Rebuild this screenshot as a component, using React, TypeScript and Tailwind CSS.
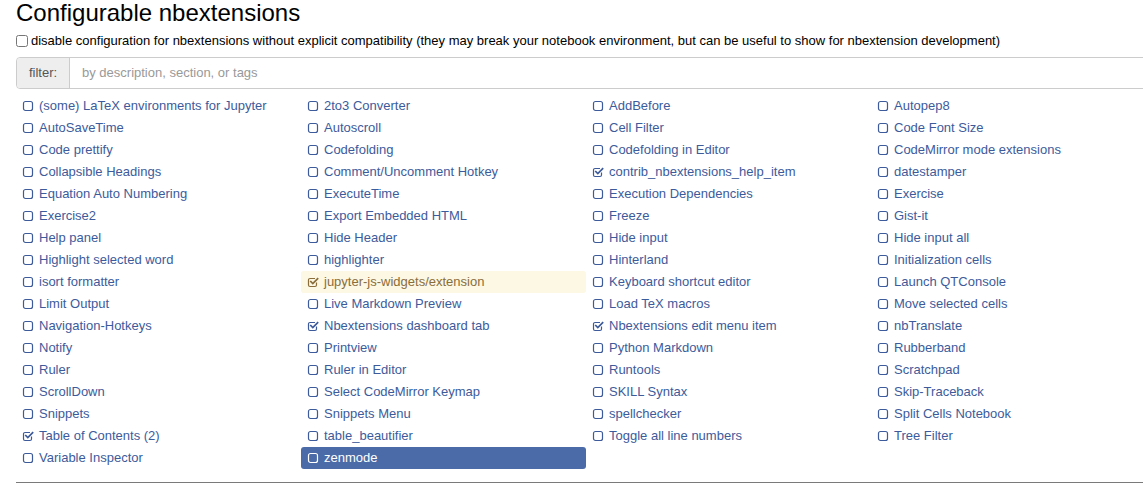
import React from 'react';

type Ext = { name: string; checked?: boolean; state?: 'warn' | 'active' };

const rows: Ext[][] = [
  [{ name: '(some) LaTeX environments for Jupyter' }, { name: '2to3 Converter' }, { name: 'AddBefore' }, { name: 'Autopep8' }],
  [{ name: 'AutoSaveTime' }, { name: 'Autoscroll' }, { name: 'Cell Filter' }, { name: 'Code Font Size' }],
  [{ name: 'Code prettify' }, { name: 'Codefolding' }, { name: 'Codefolding in Editor' }, { name: 'CodeMirror mode extensions' }],
  [{ name: 'Collapsible Headings' }, { name: 'Comment/Uncomment Hotkey' }, { name: 'contrib_nbextensions_help_item', checked: true }, { name: 'datestamper' }],
  [{ name: 'Equation Auto Numbering' }, { name: 'ExecuteTime' }, { name: 'Execution Dependencies' }, { name: 'Exercise' }],
  [{ name: 'Exercise2' }, { name: 'Export Embedded HTML' }, { name: 'Freeze' }, { name: 'Gist-it' }],
  [{ name: 'Help panel' }, { name: 'Hide Header' }, { name: 'Hide input' }, { name: 'Hide input all' }],
  [{ name: 'Highlight selected word' }, { name: 'highlighter' }, { name: 'Hinterland' }, { name: 'Initialization cells' }],
  [{ name: 'isort formatter' }, { name: 'jupyter-js-widgets/extension', checked: true, state: 'warn' }, { name: 'Keyboard shortcut editor' }, { name: 'Launch QTConsole' }],
  [{ name: 'Limit Output' }, { name: 'Live Markdown Preview' }, { name: 'Load TeX macros' }, { name: 'Move selected cells' }],
  [{ name: 'Navigation-Hotkeys' }, { name: 'Nbextensions dashboard tab', checked: true }, { name: 'Nbextensions edit menu item', checked: true }, { name: 'nbTranslate' }],
  [{ name: 'Notify' }, { name: 'Printview' }, { name: 'Python Markdown' }, { name: 'Rubberband' }],
  [{ name: 'Ruler' }, { name: 'Ruler in Editor' }, { name: 'Runtools' }, { name: 'Scratchpad' }],
  [{ name: 'ScrollDown' }, { name: 'Select CodeMirror Keymap' }, { name: 'SKILL Syntax' }, { name: 'Skip-Traceback' }],
  [{ name: 'Snippets' }, { name: 'Snippets Menu' }, { name: 'spellchecker' }, { name: 'Split Cells Notebook' }],
  [{ name: 'Table of Contents (2)', checked: true }, { name: 'table_beautifier' }, { name: 'Toggle all line numbers' }, { name: 'Tree Filter' }],
  [{ name: 'Variable Inspector' }, { name: 'zenmode', state: 'active' }],
];

function Box({ checked }: { checked?: boolean }) {
  return (
    <svg width="12" height="12" viewBox="0 0 12 12" className="shrink-0" fill="none" stroke="currentColor">
      {checked ? (
        <>
          <path d="M9.5 6.5v2.5a1.5 1.5 0 0 1-1.5 1.5H3a1.5 1.5 0 0 1-1.5-1.5V4A1.5 1.5 0 0 1 3 2.5h5" strokeWidth="1.2" />
          <path d="M3.8 5.6l2 2 4.8-4.8" strokeWidth="1.7" strokeLinecap="square" />
        </>
      ) : (
        <rect x="1.5" y="1.5" width="9" height="9" rx="2" strokeWidth="1.2" />
      )}
    </svg>
  );
}

function Item({ ext }: { ext: Ext }) {
  let cls = 'text-[#3d5b9b]';
  if (ext.state === 'warn') cls = 'bg-[#fcf8e3] text-[#8a6d3b] rounded-[3px]';
  if (ext.state === 'active') cls = 'bg-[#4a6ba8] text-white rounded-[3px]';
  return (
    <div className={`h-[22px] flex items-center gap-[5px] pl-[6px] ${cls}`}>
      <Box checked={ext.checked} />
      <span className="whitespace-nowrap">{ext.name}</span>
    </div>
  );
}

export default function App() {
  return (
    <div className="w-full h-[494px] overflow-hidden bg-white text-[13px] text-black" style={{ fontFamily: '"Liberation Sans", Arial, sans-serif' }}>
      <div className="w-[1140px] ml-4">
        <h1 className="text-[24px] leading-[26px] font-medium">Configurable nbextensions</h1>
        <label className="flex items-center gap-[3px] mt-[8px] h-[14px]">
          <input type="checkbox" className="w-[12px] h-[12px] m-0" />
          <span>disable configuration for nbextensions without explicit compatibility (they may break your notebook environment, but can be useful to show for nbextension development)</span>
        </label>
        <div className="flex mt-[9px] h-[32px] border border-[#ccc] rounded-l-[4px]">
          <div className="w-[53px] bg-[#eee] border-r border-[#ccc] flex items-center justify-center text-[#555] rounded-l-[4px]">filter:</div>
          <div className="flex items-center pl-[12px] text-[#999]">by description, section, or tags</div>
        </div>
        <div className="grid grid-cols-4 mt-[6px]">
          {rows.flat().map((e, i) => (
            <Item key={i} ext={e} />
          ))}
        </div>
        <div className="mt-[13px] border-t border-[#7a7a7a]" />
      </div>
    </div>
  );
}
